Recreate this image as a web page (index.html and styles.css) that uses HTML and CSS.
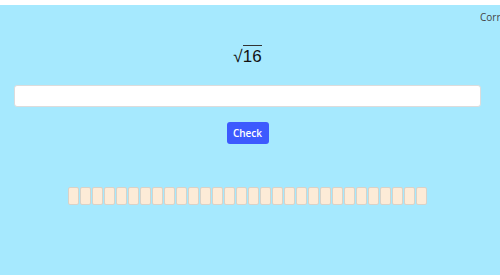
FILE: index.html
```html
<!DOCTYPE html>
<html lang="en">
<head>
    <meta charset="UTF-8">
    <title>Square Roots</title>
    <link rel="stylesheet" href="styles.css">
</head>
<body>
    <div class="app">
        <div class="score-row">
            <div class="score">Correct: 0 / 30</div>
        </div>

        <div class="problem">√<span class="radicand">16</span></div>

        <div class="answer-row">
            <input type="text" class="answer" id="answer">
        </div>

        <div class="check-row">
            <button class="check-btn" id="check">Check</button>
        </div>

        <div class="tiles" id="tiles"></div>
    </div>

    <script>
        // progress tiles, one per question
        const tiles = document.getElementById('tiles');
        for (let i = 0; i < 30; i++) {
            const t = document.createElement('div');
            t.className = 'tile';
            tiles.appendChild(t);
        }
    </script>
</body>
</html>
```

FILE: styles.css
```css
body {
    margin: 0;
    font-family: "Open Sans", Arial, sans-serif;
    background-color: #ffffff;
}

.app {
    margin-top: 5px;
    height: 270px;
    background-color: #a6e9fe;
    overflow: hidden;
    padding: 0 19px 0 14px;
    box-sizing: border-box;
}

.score-row {
    display: flex;
    height: 24px;
    padding-top: 6px;
    box-sizing: border-box;
}

.score {
    margin-left: 466px;
    white-space: nowrap;
    font-size: 10px;
    line-height: 12px;
    color: #444;
}

.problem {
    margin-top: 18px;
    text-align: center;
    font-family: "Liberation Sans", Arial, sans-serif;
    font-size: 17px;
    line-height: 20px;
    color: #111;
}

.radicand {
    border-top: 1px solid #333;
    padding-top: 1px;
}

.answer-row {
    margin-top: 18px;
}

.answer {
    display: block;
    width: 100%;
    height: 22px;
    box-sizing: border-box;
    border: 1px solid #dcdcdc;
    border-radius: 3px;
    background: #fff;
}

.check-row {
    margin-top: 13px;
    text-align: center;
}

.check-btn {
    width: 42px;
    height: 22px;
    padding: 0;
    border: none;
    border-radius: 3px;
    background-color: #3d5afe;
    color: #fff;
    font-family: "Open Sans", Arial, sans-serif;
    font-size: 10px;
    font-weight: 600;
    cursor: pointer;
}

.tiles {
    margin-top: 43px;
    display: flex;
    justify-content: center;
    gap: 1px;
}

.tile {
    width: 9px;
    height: 16px;
    background-color: #fdebd7;
    border: 1px solid #d8d2c8;
    border-radius: 2px;
}
```
